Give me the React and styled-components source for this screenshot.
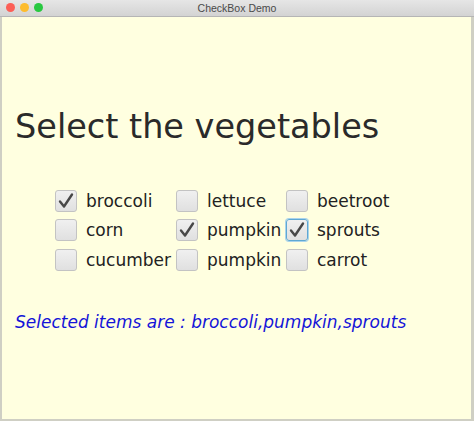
import React from "react";
import styled, { createGlobalStyle } from "styled-components";

const Global = createGlobalStyle`
  html, body { margin: 0; padding: 0; }
  body { width: 474px; height: 421px; overflow: hidden; background: #cfcfc4; }
`;

const Window = styled.div`
  width: 474px;
  height: 421px;
  display: flex;
  flex-direction: column;
  box-sizing: border-box;
  font-family: "DejaVu Sans", Verdana, sans-serif;
`;

const TitleBar = styled.div`
  height: 16px;
  flex: none;
  position: relative;
  display: flex;
  align-items: center;
  justify-content: center;
  background: linear-gradient(#e6e6e6, #d3d3d3);
  border-bottom: 1px solid #b5b5b5;
  font-family: "Liberation Sans", Arial, sans-serif;
  font-size: 10.5px;
  color: #4a4a4a;
`;

const Lights = styled.div`
  position: absolute;
  left: 6px;
  top: 3px;
  display: flex;
  gap: 5px;
`;

const Light = styled.span`
  width: 9px;
  height: 9px;
  border-radius: 50%;
  background: ${(p) => p.$c};
`;

const Content = styled.div`
  flex: 1;
  background: #ffffe0;
  margin: 0 3px 2px 2px;
  padding: 90px 0 0 13px;
  box-sizing: border-box;
`;

const Heading = styled.h1`
  margin: 0;
  font-weight: normal;
  font-size: 33.5px;
  line-height: 40px;
  color: #2a2a2a;
`;

const Grid = styled.div`
  display: grid;
  grid-template-columns: 121px 110px auto;
  grid-auto-rows: 29.5px;
  margin: 39px 0 0 40px;
`;

const Item = styled.label`
  display: flex;
  align-items: center;
  gap: 9px;
  font-size: 17px;
  color: #222;
`;

const Box = styled.span`
  width: 22px;
  height: 22px;
  box-sizing: border-box;
  border-radius: 3px;
  border: 1px solid ${(p) => (p.$focus ? "#5fa8d3" : "#c3c3c3")};
  box-shadow: ${(p) => (p.$focus ? "0 0 0 1px #a9d3ec" : "none")};
  background: linear-gradient(#f0f0f0, #e0e0e0);
  display: flex;
  align-items: center;
  justify-content: center;
  flex: none;
`;

const Result = styled.div`
  margin-top: 37px;
  font-size: 17px;
  font-style: italic;
  color: #1414d8;
`;

const Check = () => (
  <svg width="20" height="20" viewBox="0 0 20 20">
    <path d="M4 10.5 L8 15.5 L16 3.5" fill="none" stroke="#474747" strokeWidth="2.4" strokeLinecap="round" strokeLinejoin="round" />
  </svg>
);

const items = [
  ["broccoli", true], ["lettuce", false], ["beetroot", false],
  ["corn", false], ["pumpkin", true], ["sprouts", true, true],
  ["cucumber", false], ["pumpkin", false], ["carrot", false],
];

export default function App() {
  return (
    <>
      <Global />
      <Window>
        <TitleBar>
          <Lights>
            <Light $c="#fc5f57" />
            <Light $c="#fdbc2e" />
            <Light $c="#28c840" />
          </Lights>
          CheckBox Demo
        </TitleBar>
        <Content>
          <Heading>Select the vegetables</Heading>
          <Grid>
            {items.map(([name, checked, focus], i) => (
              <Item key={i}>
                <Box $focus={focus}>{checked && <Check />}</Box>
                {name}
              </Item>
            ))}
          </Grid>
          <Result>Selected items are : broccoli,pumpkin,sprouts</Result>
        </Content>
      </Window>
    </>
  );
}
